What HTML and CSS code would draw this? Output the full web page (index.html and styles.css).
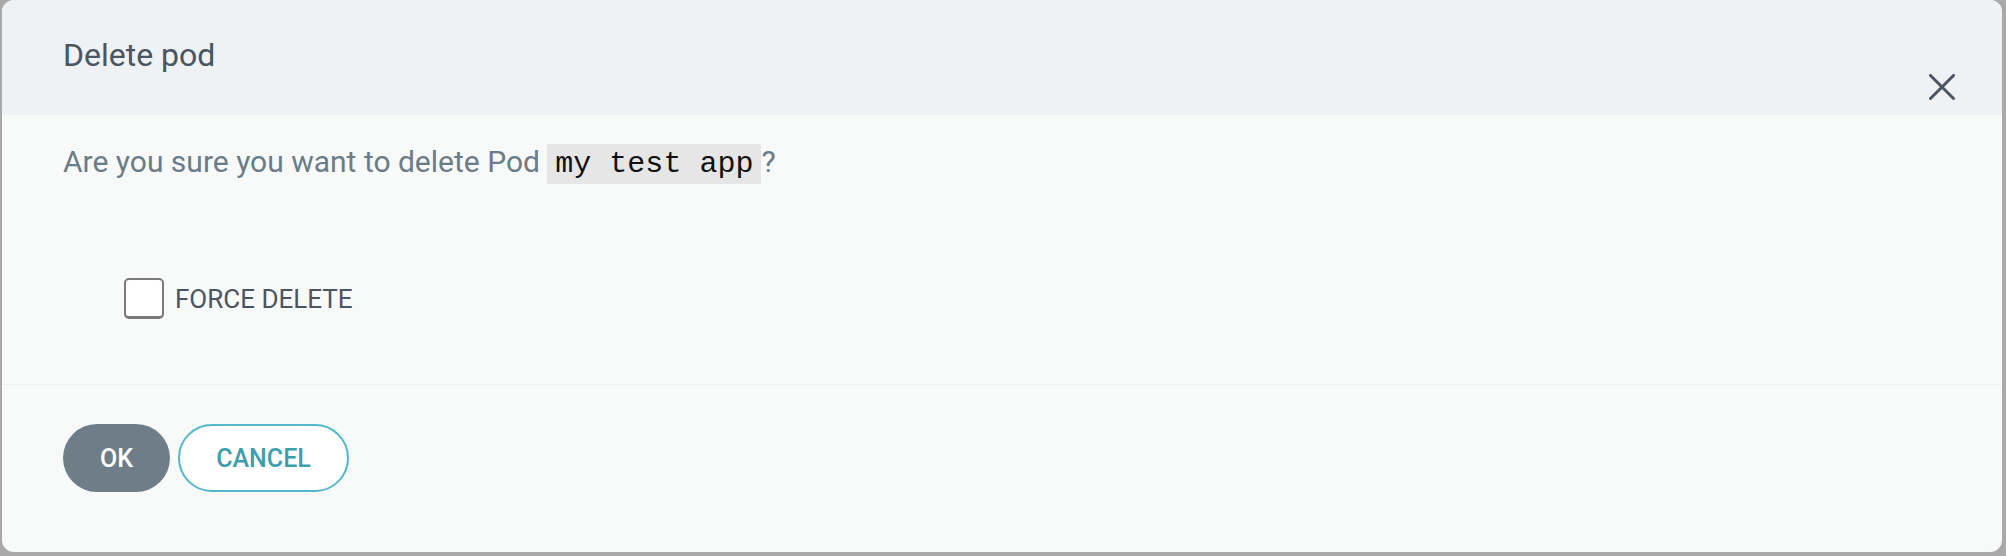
FILE: index.html
```html
<!DOCTYPE html>
<html lang="en">
<head>
    <meta charset="UTF-8">
    <meta name="viewport" content="width=device-width, initial-scale=1.0">
    <title>Delete pod</title>
    <link rel="stylesheet" href="styles.css">
</head>
<body>
    <div class="dialog">
        <!-- Header -->
        <div class="dialog-header">
            <h2 class="dialog-title">Delete pod</h2>
            <button class="close-btn" aria-label="Close">
                <svg width="26" height="26" viewBox="0 0 26 26">
                    <path d="M1.5 1.5 L24.5 24.5 M24.5 1.5 L1.5 24.5" stroke="#4b5561" stroke-width="3" stroke-linecap="round" fill="none"/>
                </svg>
            </button>
        </div>

        <!-- Body -->
        <div class="dialog-body">
            <p class="confirm-text">Are you sure you want to delete Pod <code class="pod-name">my test app</code>?</p>
            <label class="check-row">
                <span class="check-box"></span>
                <span class="check-label">FORCE DELETE</span>
            </label>
        </div>

        <!-- Footer -->
        <div class="dialog-footer">
            <button class="btn btn-ok">OK</button>
            <button class="btn btn-cancel">CANCEL</button>
        </div>
    </div>
</body>
</html>
```

FILE: styles.css
```css
* {
    margin: 0;
    padding: 0;
    box-sizing: border-box;
}

body {
    font-family: Roboto, "Liberation Sans", Arial, sans-serif;
    background-color: #a9a9a9; /* page behind the modal */
    width: 2006px;
    height: 556px;
    overflow: hidden;
}

.dialog {
    position: relative;
    margin: 0 4px 0 2px;
    height: 552px;
    background: #f8f9f9;
    border-radius: 12px;
    overflow: hidden;
    display: flex;
    flex-direction: column;
}

.dialog-header {
    height: 115px;
    background: #eef2f5;
    padding: 35px 61px 0;
}

.dialog-title {
    font-size: 32px;
    font-weight: 400;
    color: #4a5561;
    line-height: 40px;
}

.close-btn {
    position: absolute;
    top: 74px;
    right: 47px;
    width: 26px;
    height: 26px;
    border: none;
    background: none;
    cursor: pointer;
    display: flex;
}

.dialog-body {
    padding: 24px 61px 0;
    height: 270px;
    border-bottom: 1px solid #eceeef;
}

.confirm-text {
    font-size: 30px;
    color: #6b7c89;
    line-height: 46px;
}

.pod-name {
    font-family: "Liberation Mono", "Courier New", monospace;
    font-size: 30px;
    color: #111;
    background: #e6e6e6;
    padding: 3px 8px;
}

.check-row {
    display: flex;
    align-items: center;
    gap: 11px;
    margin: 91px 0 0 61px;
    cursor: pointer;
}

.check-box {
    width: 40px;
    height: 41px;
    background: #fff;
    border: 2px solid #7a7a7a;
    border-bottom-width: 3px;
    border-radius: 5px;
}

.check-label {
    font-size: 26px;
    color: #4a5561;
}

.dialog-footer {
    padding: 39px 61px 0;
    display: flex;
    gap: 8px;
}

.btn {
    height: 68px;
    border-radius: 34px;
    font-family: Roboto, "Liberation Sans", Arial, sans-serif;
    font-size: 25px;
    font-weight: 500;
    cursor: pointer;
}

.btn-ok {
    width: 107px;
    background: #6f7d88;
    color: #fff;
    border: none;
}

.btn-cancel {
    width: 171px;
    background: #fff;
    color: #3d9fae;
    border: 2px solid #52b7cb;
}
```
